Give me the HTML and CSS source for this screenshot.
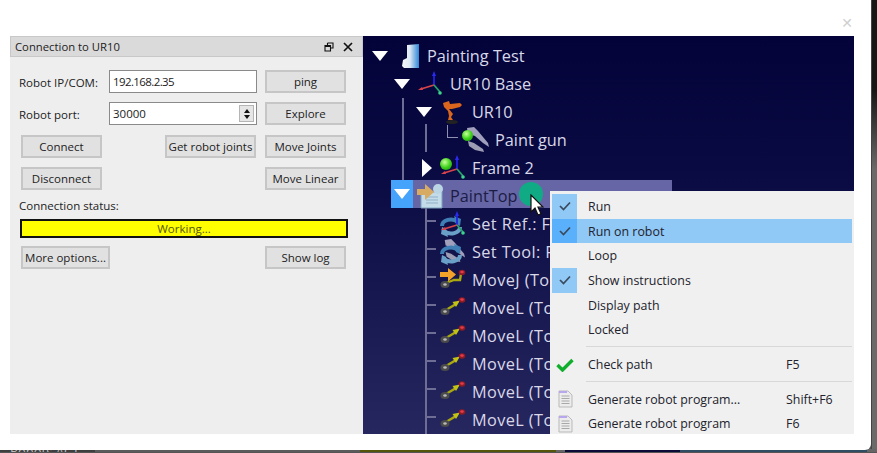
FILE: index.html
```html
<!DOCTYPE html>
<html lang="en">
<head>
<meta charset="utf-8">
<title>Connection to UR10</title>
<link rel="stylesheet" href="styles.css">
</head>
<body>
<svg class="defs" width="0" height="0" aria-hidden="true">
  <defs>
    <radialGradient id="ball" cx="40%" cy="35%" r="70%"><stop offset="0" stop-color="#c8ff9c"/><stop offset=".5" stop-color="#3fd21c"/><stop offset="1" stop-color="#128a0c"/></radialGradient>
    <linearGradient id="stn" x1="0" x2="1"><stop offset="0" stop-color="#f6f6f6"/><stop offset=".45" stop-color="#dfeaf5"/><stop offset="1" stop-color="#2f88d8"/></linearGradient>
    <symbol id="frame" viewBox="0 0 26 26">
      <path d="M17 14V3" stroke="#2222e6" stroke-width="1.800" fill="none"/><path d="M17 0l-2 5h4z" fill="#2a2aee"/>
      <path d="M17 14L4 18" stroke="#d8434b" stroke-width="1.800" fill="none"/><path d="M1 19l4-3 1 3z" fill="#d8434b"/>
      <path d="M17 14l6 7" stroke="#25a56c" stroke-width="1.800" fill="none"/><circle cx="23" cy="22" r="1.800" fill="#3fd28c"/>
    </symbol>
    <symbol id="claws" viewBox="0 0 28 26">
      <path d="M5 1l7-1 4 4 10 12 1 4-6-4-8-7-7-2z" fill="#a0a0bc"/>
      <path d="M6 14l6 2 9 6 1 3-9-2-6-4z" fill="#9c9cb4"/>
    </symbol>
    <symbol id="move" viewBox="0 0 26 24">
      <path d="M6 14L16 8" stroke="#a9a810" stroke-width="2.400" fill="none"/><path d="M20 4.500l-7.500 1.500 3.500 5z" fill="#c3c316"/>
      <ellipse cx="5" cy="15.500" rx="4.500" ry="3.500" fill="#4b4b4b"/><ellipse cx="5" cy="15.500" rx="1.800" ry="1.200" fill="#b9b9b9"/>
      <ellipse cx="22" cy="4" rx="3.300" ry="2.700" fill="#8d1c26"/><ellipse cx="22" cy="3.600" rx="1.800" ry="1.300" fill="#e23a48"/>
    </symbol>
    <symbol id="movej" viewBox="0 0 26 24">
      <path d="M6 15l8-3h6l1-6" stroke="#a9a810" stroke-width="2.400" fill="none"/>
      <ellipse cx="5" cy="16.500" rx="4.500" ry="3.500" fill="#4b4b4b"/><ellipse cx="5" cy="16.500" rx="1.800" ry="1.200" fill="#b9b9b9"/>
      <ellipse cx="22" cy="4.500" rx="3.300" ry="2.700" fill="#8d1c26"/><ellipse cx="22" cy="4" rx="1.800" ry="1.300" fill="#e23a48"/>
      <path d="M0 4h8V0l8 6.500-8 7V9H0z" fill="#f4a32a"/>
    </symbol>
    <symbol id="doc" viewBox="0 0 18 18">
      <path d="M3 1h9l4 4v12H3z" fill="#ececec" stroke="#b9b9b9"/><path d="M3 1h8v2H3z" fill="#b8a6ee"/>
      <path d="M5.500 6h8M5.500 8.500h8M5.500 11h8M5.500 13.500h8" stroke="#a8a8a8"/>
    </symbol>
    <symbol id="refswap" viewBox="0 0 22 21">
      <path d="M2 10C2 4 12 1 18 6" stroke="#3f7fb5" stroke-width="4" fill="none"/><path d="M14 0l7 3-1 7-4-2z" fill="#3f7fb5"/>
      <path d="M20 11c0 6-10 9-16 4" stroke="#6aa0c8" stroke-width="4" fill="none"/><path d="M8 21l-7-3 1-7 4 2z" fill="#6aa0c8"/>
    </symbol>
    <symbol id="tick" viewBox="0 0 14 12"><path d="M2 6l3.500 3.500L12 2.500" stroke="#3a4a5c" stroke-width="1.700" fill="none"/></symbol>
  </defs>
</svg>

<main class="modal">
  <div class="close">&#10005;</div>
  <div class="content">
    <section class="panel">
      <header class="panel-title">
        <span>Connection to UR10</span>
        <span class="title-icons">
          <svg width="10" height="10" viewBox="0 0 10 10"><path d="M3.500 1h5.500v5h-2M1 3.500h5.500V9H1zM3.500 1v2.500M1 4.500h5.500" fill="none" stroke="#111" stroke-width="1.100"/></svg>
          <svg width="10" height="10" viewBox="0 0 10 10"><path d="M1 1l8 8M9 1l-8 8" stroke="#111" stroke-width="1.700"/></svg>
        </span>
      </header>
      <div class="panel-body">
        <div class="row row-a">
          <label class="lbl">Robot IP/COM:</label>
          <div class="field ip">192.168.2.35</div>
          <button class="btn btn-w">ping</button>
        </div>
        <div class="row row-a">
          <label class="lbl">Robot port:</label>
          <div class="field spin">30000
            <span class="spinner"><i class="up"></i><i class="down"></i></span>
          </div>
          <button class="btn btn-w">Explore</button>
        </div>
        <div class="row">
          <button class="btn btn-w">Connect</button>
          <span class="grow"></span>
          <button class="btn btn-j">Get robot joints</button>
          <button class="btn btn-w">Move Joints</button>
        </div>
        <div class="row">
          <button class="btn btn-w">Disconnect</button>
          <span class="grow"></span>
          <button class="btn btn-w">Move Linear</button>
        </div>
        <div class="status-label">Connection status:</div>
        <div class="status-bar">Working...</div>
        <div class="row">
          <button class="btn btn-more">More options...</button>
          <span class="grow"></span>
          <button class="btn btn-w">Show log</button>
        </div>
      </div>
    </section>

    <section class="tree">
      <div class="node d0"><i class="tw"></i>
        <svg class="ic" width="18" height="25" viewBox="0 0 18 25"><path d="M5 1l12-1v24H2L0 22l1-6 4-2z" fill="url(#stn)"/></svg>
        <span>Painting Test</span></div>
      <div class="node d1"><i class="tw"></i><svg class="ic" width="26" height="26"><use href="#frame"/></svg><span>UR10 Base</span></div>
      <div class="node d2"><b class="v v1"></b><i class="tw"></i>
        <svg class="ic" width="22" height="24" viewBox="0 0 22 24"><path d="M1 3l6-2 1 3 10-1 2 2-2 2-8 2-3 0 4 5-2 3 2 3H6l1-4-1-5-4-4z" fill="#d9661c"/><ellipse cx="10" cy="22" rx="6" ry="2" fill="#222"/></svg>
        <span>UR10</span></div>
      <div class="node d3"><b class="v v1"></b><b class="v v2"></b><b class="corner"></b>
        <span class="stack gunbox"><svg class="ov" width="28" height="26"><use href="#claws"/></svg><span class="ball gball"></span></span>
        <span>Paint gun</span></div>
      <div class="node d2"><b class="v v1 short"></b><i class="tw right"></i><span class="ball"></span><svg class="ic ic-f" width="26" height="26"><use href="#frame"/></svg><span>Frame 2</span></div>
      <div class="node d1 selected">
        <span class="sel-box"><i class="tw"></i></span>
        <svg class="ic" width="26" height="26" viewBox="0 0 26 26"><path d="M4 9h21v16H4z" fill="#c4dcea" stroke="#7aa2bd"/><path d="M9 14h12M9 17h12M9 20h12" stroke="#8fb0c6"/><circle cx="21" cy="6" r="5" fill="#bcd5e4"/><path d="M0 6h8V1l9 8-9 8v-5H0z" fill="#d8ab64"/></svg>
        <span>PaintTop</span>
        <span class="touch"></span>
      </div>
      <div class="node leaf"><b class="v v2b"></b><b class="h"></b><span class="stack"><svg class="sw" width="22" height="21"><use href="#refswap"/></svg><svg class="ov" width="26" height="26"><use href="#frame"/></svg></span><span>Set Ref.: Frame</span></div>
      <div class="node leaf"><b class="v v2b"></b><b class="h"></b><span class="stack"><svg class="ov" width="26" height="24"><use href="#claws"/></svg><svg class="sw" width="22" height="21"><use href="#refswap"/></svg></span><span>Set Tool: Paint</span></div>
      <div class="node leaf"><b class="v v2b"></b><b class="h"></b><svg class="ic" width="26" height="24"><use href="#movej"/></svg><span>MoveJ (Top)</span></div>
      <div class="node leaf"><b class="v v2b"></b><b class="h"></b><svg class="ic" width="26" height="24"><use href="#move"/></svg><span>MoveL (Top)</span></div>
      <div class="node leaf"><b class="v v2b"></b><b class="h"></b><svg class="ic" width="26" height="24"><use href="#move"/></svg><span>MoveL (Top)</span></div>
      <div class="node leaf"><b class="v v2b"></b><b class="h"></b><svg class="ic" width="26" height="24"><use href="#move"/></svg><span>MoveL (Top)</span></div>
      <div class="node leaf"><b class="v v2b"></b><b class="h"></b><svg class="ic" width="26" height="24"><use href="#move"/></svg><span>MoveL (Top)</span></div>
      <div class="node leaf"><b class="v v2b"></b><b class="h"></b><svg class="ic" width="26" height="24"><use href="#move"/></svg><span>MoveL (Top)</span></div>

      <svg class="cursor" width="14" height="23" viewBox="0 0 14 23"><path d="M1 1v17l4-4 3 7 3-1.300-3-6.700h5z" fill="#fff" stroke="#111" stroke-width="1.200"/></svg>

      <nav class="menu">
        <div class="mi"><span class="chk on"><svg width="14" height="12"><use href="#tick"/></svg></span><span class="mt">Run</span></div>
        <div class="mi active"><span class="chk on"><svg width="14" height="12"><use href="#tick"/></svg></span><span class="mt">Run on robot</span></div>
        <div class="mi"><span class="chk"></span><span class="mt">Loop</span></div>
        <div class="mi"><span class="chk on"><svg width="14" height="12"><use href="#tick"/></svg></span><span class="mt">Show instructions</span></div>
        <div class="mi"><span class="chk"></span><span class="mt">Display path</span></div>
        <div class="mi"><span class="chk"></span><span class="mt">Locked</span></div>
        <hr class="sep">
        <div class="mi"><span class="chk"><svg width="18" height="15" viewBox="0 0 18 15"><path d="M1.500 8l5 5L16.500 3" stroke="#0fae2c" stroke-width="3.400" fill="none"/></svg></span><span class="mt">Check path</span><span class="ms">F5</span></div>
        <hr class="sep">
        <div class="mi"><span class="chk"><svg width="18" height="18"><use href="#doc"/></svg></span><span class="mt">Generate robot program...</span><span class="ms">Shift+F6</span></div>
        <div class="mi"><span class="chk"><svg width="18" height="18"><use href="#doc"/></svg></span><span class="mt">Generate robot program</span><span class="ms">F6</span></div>
      </nav>
    </section>
  </div>
</main>
<div class="edge"></div>
<footer class="under">
  <span class="u1">Robots ACT</span><span class="u2"></span><span class="u3"></span><span class="u4"></span><span class="u5"></span><span class="u6"></span><span class="u7"></span>
</footer>
</body>
</html>
```

FILE: styles.css
```css
* { box-sizing: border-box; }
html, body { margin: 0; padding: 0; }
body {
  width: 877px; height: 453px; overflow: hidden;
  display: grid; grid-template-columns: 871px 6px; grid-template-rows: 450px 3px;
  background: #555;
  font-family: "Open Sans", "Noto Sans", sans-serif;
}
.defs { position: absolute; }

.modal { position: relative; background: #fff; border-radius: 0 0 6px 0; padding: 36px 17px 16px 10px; z-index: 1; }
.close { position: absolute; top: 14px; right: 18px; font: bold 14px/18px "DejaVu Sans", sans-serif; color: #cfcfcf; }
.content { display: flex; height: 398px; }

.edge { background: linear-gradient(#161616 0, #161616 90px, #6a6a6a 170px); border-left: 1px solid #444; }
.under { grid-column: 1 / 3; display: flex; height: 3px; overflow: hidden; background: #555; margin-top: -1px; }
.under span { display: block; height: 4px; }
.u1 { width: 95px; background: #3f3f3f; color: #bbb; font-size: 13px; line-height: 4px; padding-left: 10px; overflow: hidden; white-space: nowrap; }
.u2 { width: 265px; background: #5b5b5b; }
.u3 { width: 196px; background: #56560b; }
.u4 { width: 9px; background: #666; }
.u5 { width: 115px; background: #0b0b38; }
.u6 { width: 187px; background: #2f4d63; }
.u7 { flex: 1; background: #666; }

/* left dock panel */
.panel { width: 353px; background: #eee; display: flex; flex-direction: column; font-family: "Open Sans", sans-serif; font-size: 11.500px; color: #222; }
.panel-title { height: 21px; padding: 0 9px 0 4px; background: #dadada; border: 1px solid #c8c8c8; display: flex; align-items: center; justify-content: space-between; font-size: 11.300px; }
.title-icons { display: flex; gap: 9px; }
.panel-body { padding: 13px 17px 0 11px; display: flex; flex-direction: column; }
.row { display: flex; align-items: center; height: 23px; margin-bottom: 9.300px; }
.row-a { margin-left: -2px; }
.lbl { width: 90px; white-space: nowrap; padding-top: 1px; }
.field { width: 148px; height: 23px; background: #fff; border: 1px solid #8a8a8a; padding-left: 3px; line-height: 22px; margin-right: 8px; position: relative; font-size: 11.500px; }
.ip { letter-spacing: -.6px; }
.spinner { position: absolute; right: 2px; top: 2px; width: 15px; height: 17px; background: #e6e6e6; border: 1px solid #b5b5b5; display: flex; flex-direction: column; align-items: center; justify-content: center; gap: 2px; }
.spinner i { width: 0; height: 0; border-left: 3px solid transparent; border-right: 3px solid transparent; }
.spinner .up { border-bottom: 4px solid #111; }
.spinner .down { border-top: 4px solid #111; }
.btn { height: 23px; background: #e1e1e1; border: 2px solid #c6c6c6; padding: 0; font: 11.500px "Open Sans", sans-serif; color: #222; white-space: nowrap; }
.btn-w { width: 81px; }
.btn-j { width: 91px; margin-right: 9px; }
.btn-more { width: 89px; }
.grow { flex: 1; }
.status-label { margin-bottom: 3.800px; height: 16px; line-height: 14px; margin-left: -2px; }
.status-bar { width: 328px; height: 19px; margin-left: -1px; margin-bottom: 8px; background: #ff0; border: 2px solid #111; text-align: center; line-height: 15px; color: #555500; font-size: 11.500px; }

/* tree */
.tree { position: relative; flex: 1; overflow: hidden; padding-top: 6px; background: linear-gradient(#03033a 0, #0a0a42 130px, #27275f 398px); color: #d8d8e8; font-family: "Open Sans", sans-serif; font-size: 16.300px; }
.node { position: relative; height: 28px; display: flex; align-items: center; white-space: nowrap; }
.tw { flex: none; width: 0; height: 0; margin-right: 7px; border-left: 8px solid transparent; border-right: 8px solid transparent; border-top: 10px solid #fff; }
.tw.right { border-top: 9px solid transparent; border-bottom: 9px solid transparent; border-left: 10px solid #fff; border-right: 0; margin-left: 6px; margin-right: 0; }
.ic { flex: none; display: block; }
.d0 { padding-left: 9px; }
.d0 .ic { margin-left: 7px; margin-right: 7px; }
.d1 { padding-left: 31px; }
.d1 .ic { margin-right: 7px; }
.d2 { padding-left: 53px; }
.d2 .ic { margin-left: 3px; margin-right: 8px; }
.d2 .ic-f { margin: 0 6px 0 0; }
.d3 { padding-left: 99px; }

.v, .h, .corner { position: absolute; background: #6d6d95; display: block; }
.v { width: 2px; }
.v1 { left: 39px; top: 0; height: 28px; }
.v1.short { height: 26px; }
.v2 { left: 62px; top: -2px; height: 28px; background: #6d6d95; }
.corner { left: 84px; top: -1px; width: 11px; height: 13px; background: none; border-left: 1px solid #8f8fb0; border-bottom: 1px solid #8f8fb0; }
.v2b { left: 62px; top: -2px; height: 30px; }
.h { left: 64px; top: 10px; width: 9px; height: 2px; }
.leaf { padding-left: 77px; letter-spacing: .4px; }
.leaf > span:last-child { margin-left: 6px; }
.stack { position: relative; flex: none; width: 26px; height: 26px; display: block; }
.sw { position: absolute; left: 0; top: 5px; }
.ov { position: absolute; left: 0; top: 0; }
.gunbox { width: 28px; margin-right: 5px; }
.ball { flex: none; width: 12px; height: 12px; border-radius: 50%; background: radial-gradient(circle at 40% 35%, #c8ff9c, #3fd21c 50%, #128a0c); margin-left: 8px; margin-right: -12px; margin-top: -8px; position: relative; z-index: 1; }
.gball { position: absolute; left: 0; top: 3px; margin: 0; width: 11px; height: 11px; }

.selected { color: #1c1c45; }
.selected::before { content: ""; position: absolute; left: 28px; top: -2px; width: 281px; height: 28px; background: #6666a6; }
.selected > * { position: relative; }
.sel-box { flex: none; width: 22px; height: 28px; margin-left: -3px; margin-top: -4px; background: #46a3fb; display: flex; align-items: center; justify-content: center; }
.sel-box .tw { margin: 0; }
.selected .ic { margin-left: 4px; margin-right: 7px; }
.touch { width: 24px; height: 24px; border-radius: 50%; background: #10ab84; margin-left: 2px; margin-top: -4px; flex: none; }
.cursor { position: absolute; left: 167px; top: 158px; z-index: 4; }

/* context menu */
.menu { position: absolute; left: 187px; top: 155px; width: 304px; height: 243px; z-index: 3; overflow: hidden; background: #f0f0f0; padding: 3px 2px 0; font-family: "Open Sans", sans-serif; font-size: 12.400px; color: #22222c; }
.mi { display: flex; align-items: center; height: 24.700px; flex: none; }
.chk { flex: none; width: 25px; height: 24.700px; display: flex; align-items: center; justify-content: center; }
.chk.on { background: #90c8f6; }
.mt { margin-left: 11px; width: 198px; white-space: nowrap; }
.ms { white-space: nowrap; }
.active { background: #90c8f6; }
.active .chk.on { background: #5bb0fb; }
.sep { border: 0; height: 1px; margin: 4px 0 5px 34px; background: #d8d8d8; }
```
